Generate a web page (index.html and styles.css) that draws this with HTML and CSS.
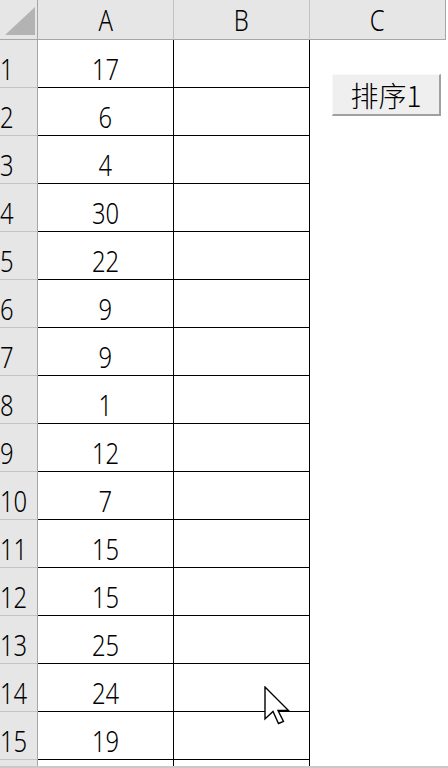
FILE: index.html
```html
<!DOCTYPE html>
<html lang="zh">
<head>
<meta charset="utf-8">
<link rel="stylesheet" href="styles.css">
</head>
<body>
<div class="sheet">
  <div class="grid">
    <div class="corner"><span class="tri"></span></div>
    <div class="colhead"><span class="t">A</span></div>
    <div class="colhead"><span class="t">B</span></div>
    <div class="colhead last"><span class="t">C</span></div>

    <div class="rowhead"><span class="t">1</span></div><div class="cell"><span class="t">17</span></div><div class="cell"></div><div class="cell c"></div>
    <div class="rowhead"><span class="t">2</span></div><div class="cell"><span class="t">6</span></div><div class="cell"></div><div class="cell c"></div>
    <div class="rowhead"><span class="t">3</span></div><div class="cell"><span class="t">4</span></div><div class="cell"></div><div class="cell c"></div>
    <div class="rowhead"><span class="t">4</span></div><div class="cell"><span class="t">30</span></div><div class="cell"></div><div class="cell c"></div>
    <div class="rowhead"><span class="t">5</span></div><div class="cell"><span class="t">22</span></div><div class="cell"></div><div class="cell c"></div>
    <div class="rowhead"><span class="t">6</span></div><div class="cell"><span class="t">9</span></div><div class="cell"></div><div class="cell c"></div>
    <div class="rowhead"><span class="t">7</span></div><div class="cell"><span class="t">9</span></div><div class="cell"></div><div class="cell c"></div>
    <div class="rowhead"><span class="t">8</span></div><div class="cell"><span class="t">1</span></div><div class="cell"></div><div class="cell c"></div>
    <div class="rowhead"><span class="t">9</span></div><div class="cell"><span class="t">12</span></div><div class="cell"></div><div class="cell c"></div>
    <div class="rowhead"><span class="t">10</span></div><div class="cell"><span class="t">7</span></div><div class="cell"></div><div class="cell c"></div>
    <div class="rowhead"><span class="t">11</span></div><div class="cell"><span class="t">15</span></div><div class="cell"></div><div class="cell c"></div>
    <div class="rowhead"><span class="t">12</span></div><div class="cell"><span class="t">15</span></div><div class="cell"></div><div class="cell c"></div>
    <div class="rowhead"><span class="t">13</span></div><div class="cell"><span class="t">25</span></div><div class="cell"></div><div class="cell c"></div>
    <div class="rowhead"><span class="t">14</span></div><div class="cell"><span class="t">24</span></div><div class="cell"></div><div class="cell c"></div>
    <div class="rowhead"><span class="t">15</span></div><div class="cell"><span class="t">19</span></div><div class="cell"></div><div class="cell c"></div>
    <div class="rowhead"></div><div class="cell"></div><div class="cell"></div><div class="cell c"></div>
  </div>

  <button class="sortbtn" type="button">排序1</button>

  <svg class="cursor" width="28" height="40" viewBox="0 0 28 40">
    <path d="M1 1 L1 33 L9 25.5 L14.5 37.5 L19.5 35.5 L14 24.5 L24.5 24.5 Z" fill="#fff" stroke="#000" stroke-width="1.4" stroke-linejoin="miter"/>
  </svg>
</div>
</body>
</html>
```

FILE: styles.css
```css
html, body {
  margin: 0;
  padding: 0;
  background: #ffffff;
}

body {
  width: 448px;
  height: 768px;
  overflow: hidden;
  font-family: "Noto Sans", "Noto Sans CJK SC", sans-serif;
  color: #000;
}

.sheet {
  position: relative;
  width: 448px;
  height: 768px;
  box-sizing: border-box;
  border-bottom: 2px solid #c9c9c9;
  overflow: hidden;
}

.grid {
  display: grid;
  grid-template-columns: 38px 136px 136px 136px;
  grid-template-rows: 40px repeat(16, 48px);
}

.t {
  display: inline-block;
  font-size: 29px;
  font-weight: 300;
  line-height: 29px;
  transform: scaleX(0.82);
  white-space: nowrap;
}

.corner {
  background: #e6e6e6;
  box-sizing: border-box;
  border-right: 1px solid #a6a6a6;
  border-bottom: 1px solid #a6a6a6;
  position: relative;
}

.tri {
  position: absolute;
  left: 5px;
  top: 7px;
  width: 30px;
  height: 28px;
  background: #b3b3b3;
  clip-path: polygon(100% 0, 100% 100%, 0 100%);
}

.colhead {
  background: #e6e6e6;
  box-sizing: border-box;
  border-right: 1px solid #c2c2c2;
  border-bottom: 1px solid #a6a6a6;
  display: flex;
  align-items: flex-end;
  justify-content: center;
  padding-bottom: 5px;
}

.colhead.last {
  border-right-color: #a6a6a6;
}

.rowhead {
  background: #e6e6e6;
  box-sizing: border-box;
  border-right: 1px solid #a6a6a6;
  border-bottom: 1px solid #c2c2c2;
  display: flex;
  align-items: flex-end;
  justify-content: flex-start;
  padding-bottom: 4px;
  overflow: visible;
}

.rowhead .t {
  transform-origin: left center;
  margin-left: 0;
}

.cell {
  box-sizing: border-box;
  border-right: 1px solid #000;
  border-bottom: 1px solid #000;
  display: flex;
  align-items: flex-end;
  justify-content: center;
  padding-bottom: 4px;
}

.cell.c {
  border: none;
}

.sortbtn {
  position: absolute;
  left: 332px;
  top: 74px;
  width: 109px;
  height: 42px;
  box-sizing: border-box;
  margin: 0;
  padding: 0;
  background: #efefef;
  border-style: solid;
  border-width: 1px 2px 2px 1px;
  border-color: #f8f8f8 #a0a0a0 #a0a0a0 #f8f8f8;
  font-family: "Noto Sans CJK SC", sans-serif;
  font-size: 28px;
  font-weight: 300;
  line-height: 38px;
  color: #000;
  text-align: center;
}

.cursor {
  position: absolute;
  left: 264px;
  top: 686px;
}
```
